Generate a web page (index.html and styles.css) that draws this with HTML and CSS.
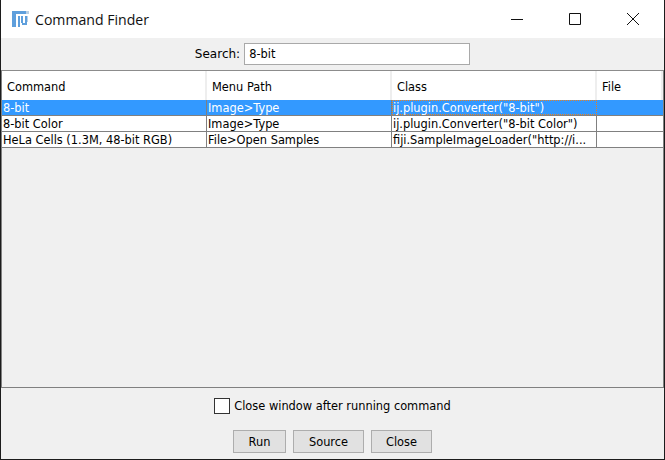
FILE: index.html
```html
<!DOCTYPE html>
<html lang="en">
<head>
<meta charset="utf-8">
<title>Command Finder</title>
<link rel="stylesheet" href="styles.css">
</head>
<body>
<div class="window">
  <header class="titlebar">
    <svg class="appicon" width="17" height="17" viewBox="0 0 17 17">
      <path fill="#5f9fdc" d="M0 0h14v3H0zM0 3h4v13H0zM6 5h2v11H6zM9 5h2v7H9zM13 5h2v9h-5v-2h3z"/>
      <path fill="#b9cfe4" d="M14 0h3v3h-3zM15 5h1v6h-1z"/>
    </svg>
    <span class="title">Command Finder</span>
    <div class="controls">
      <svg class="ctl" width="12" height="12" viewBox="0 0 12 12"><path stroke="#111" fill="none" d="M0 6.5h12"/></svg>
      <svg class="ctl" width="12" height="12" viewBox="0 0 12 12"><path stroke="#111" fill="none" d="M.5.5h11v11H.5z"/></svg>
      <svg class="ctl" width="12" height="12" viewBox="0 0 12 12"><path stroke="#111" fill="none" d="M0 0l12 12M12 0L0 12"/></svg>
    </div>
  </header>
  <main class="content">
    <div class="search">
      <label class="search-label" for="q">Search:</label>
      <input id="q" class="search-input" type="text" value="8-bit">
    </div>
    <div class="table">
      <div class="row head">
        <div class="cell c1">Command</div>
        <div class="cell c2">Menu Path</div>
        <div class="cell c3">Class</div>
        <div class="cell c4">File</div>
      </div>
      <div class="row item selected">
        <div class="cell c1">8-bit</div>
        <div class="cell c2">Image&gt;Type</div>
        <div class="cell c3 focus">ij.plugin.Converter("8-bit")</div>
        <div class="cell c4"></div>
      </div>
      <div class="row item">
        <div class="cell c1">8-bit Color</div>
        <div class="cell c2">Image&gt;Type</div>
        <div class="cell c3">ij.plugin.Converter("8-bit Color")</div>
        <div class="cell c4"></div>
      </div>
      <div class="row item">
        <div class="cell c1">HeLa Cells (1.3M, 48-bit RGB)</div>
        <div class="cell c2">File&gt;Open Samples</div>
        <div class="cell c3">fiji.SampleImageLoader("http://i...</div>
        <div class="cell c4"></div>
      </div>
    </div>
    <label class="option"><span class="checkbox"></span><span>Close window after running command</span></label>
    <div class="buttons">
      <button class="btn run">Run</button>
      <button class="btn source">Source</button>
      <button class="btn close">Close</button>
    </div>
  </main>
</div>
</body>
</html>
```
FILE: styles.css
```css
html, body { margin: 0; padding: 0; }
body { width: 665px; height: 460px; overflow: hidden; background: #f0f0f0; }
.window {
  box-sizing: border-box; width: 665px; height: 460px;
  border: 1px solid #1c1c1c; border-top: 0;
  display: flex; flex-direction: column;
  font: 11.4px/16px "DejaVu Sans", Tahoma, sans-serif; color: #000;
}
.titlebar { height: 38px; background: #fff; display: flex; align-items: center; flex: none; }
.appicon { margin-left: 11px; margin-right: 6px; }
.title { font: 14.1px "Open Sans", sans-serif; color: #111; }
.controls { margin-left: auto; display: flex; align-items: center; }
.ctl { margin-right: 46px; }
.ctl:last-child { margin-right: 25px; }
.content { flex: 1; display: flex; flex-direction: column; background: #f0f0f0; }
.search { height: 32px; flex: none; display: flex; align-items: center; justify-content: center; gap: 4px; box-sizing: border-box; }
.search-label { display: block; font-size: 12px; }
.search-input {
  box-sizing: border-box; width: 226px; height: 22px; padding: 0 4px; margin: 0;
  border: 1px solid #a9a9a9; background: #fff; font: inherit; color: #000; outline: none;
}
.table { height: 318px; flex: none; box-sizing: border-box; border: 1px solid #808080; border-top-color: #8c8c8c; background: #f0f0f0; }
.row { display: flex; }
.head { height: 29px; background: #fff; }
.head .cell { line-height: 33px; padding-left: 5px; border-right: 2px solid #eee; }
.item { height: 16px; background: #fff; border-bottom: 1px solid #808080; box-sizing: border-box; }
.cell { box-sizing: border-box; white-space: nowrap; overflow: hidden; padding-left: 1px; }
.item .cell { border-right: 1px solid #808080; line-height: 17px; }
.c1 { width: 205px; }
.c2 { width: 185px; }
.c3 { width: 205px; }
.c4 { flex: 1; }
.item .c4 { border-right: 0; }
.selected { background: #3399ff; color: #fff; }
.selected .cell { border-right-color: #808080; }
.selected .focus {
  border-right: 0;
  background:
    repeating-linear-gradient(90deg, #e8801f 0 1px, transparent 1px 2px) top / 100% 1px no-repeat,
    repeating-linear-gradient(90deg, #e8801f 0 1px, transparent 1px 2px) bottom / 100% 1px no-repeat,
    repeating-linear-gradient(0deg, #e8801f 0 1px, transparent 1px 2px) left / 1px 100% no-repeat,
    repeating-linear-gradient(0deg, #e8801f 0 1px, transparent 1px 2px) right / 1px 100% no-repeat;
}
.option { display: flex; align-items: center; justify-content: center; gap: 4px; height: 36px; flex: none; }
.checkbox { box-sizing: border-box; width: 16px; height: 16px; border: 1px solid #333; background: #fff; }
.buttons { display: flex; justify-content: center; gap: 7px; margin-top: 6px; }
.btn {
  box-sizing: border-box; height: 23px; padding: 0; margin: 0;
  border: 1px solid #adadad; background: #e1e1e1; font: inherit; color: #000;
}
.run { width: 53px; }
.source { width: 71px; }
.close { width: 61px; }
```
